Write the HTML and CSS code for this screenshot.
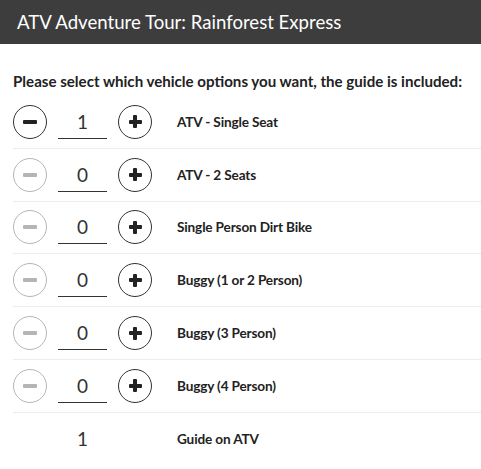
FILE: index.html
```html
<!DOCTYPE html>
<html>
<head>
<meta charset="utf-8">
<link rel="stylesheet" href="styles.css">
</head>
<body>
<header class="topbar"><h1 class="title">ATV Adventure Tour: Rainforest Express</h1></header>
<main class="content">
  <p class="intro">Please select which vehicle options you want, the guide is included:</p>
  <ul class="options">
    <li class="row">
      <button class="btn"><span class="minus"></span></button>
      <span class="qty">1</span>
      <button class="btn"><span class="plus"></span></button>
      <span class="label">ATV - Single Seat</span>
    </li>
    <li class="row">
      <button class="btn off"><span class="minus"></span></button>
      <span class="qty">0</span>
      <button class="btn"><span class="plus"></span></button>
      <span class="label">ATV - 2 Seats</span>
    </li>
    <li class="row">
      <button class="btn off"><span class="minus"></span></button>
      <span class="qty">0</span>
      <button class="btn"><span class="plus"></span></button>
      <span class="label">Single Person Dirt Bike</span>
    </li>
    <li class="row">
      <button class="btn off"><span class="minus"></span></button>
      <span class="qty">0</span>
      <button class="btn"><span class="plus"></span></button>
      <span class="label">Buggy (1 or 2 Person)</span>
    </li>
    <li class="row">
      <button class="btn off"><span class="minus"></span></button>
      <span class="qty">0</span>
      <button class="btn"><span class="plus"></span></button>
      <span class="label">Buggy (3 Person)</span>
    </li>
    <li class="row">
      <button class="btn off"><span class="minus"></span></button>
      <span class="qty">0</span>
      <button class="btn"><span class="plus"></span></button>
      <span class="label">Buggy (4 Person)</span>
    </li>
    <li class="row guide">
      <span class="spacer"></span>
      <span class="qty fixed">1</span>
      <span class="spacer"></span>
      <span class="label">Guide on ATV</span>
    </li>
  </ul>
</main>
</body>
</html>
```

FILE: styles.css
```css
* { box-sizing: border-box; }
html, body { margin: 0; padding: 0; background: #fff; }
body { font-family: "Lato", "Open Sans", sans-serif; color: #222; overflow: hidden; }
.topbar { height: 44px; background: #3d3d3d; display: flex; align-items: center; padding-left: 17px; }
.title { margin: 0; font-size: 18.6px; font-weight: 400; color: #fff; }
.content { padding-left: 13px; }
.intro { margin: 0; padding-top: 27px; height: 52px; font-size: 15.1px; font-weight: 700; color: #222; line-height: 20px; }
.options { list-style: none; margin: 0; padding: 0; }
.row { display: flex; align-items: center; height: 52.8px; border-bottom: 1px solid #ececec; }
.row.guide { border-bottom: none; }
.btn { width: 34px; height: 34px; border-radius: 50%; border: 1px solid #333; background: #fff; padding: 0; display: flex; align-items: center; justify-content: center; flex: none; }
.btn.off { border-color: #b5b5b5; }
.minus { display: block; width: 14px; height: 4px; border-radius: 1px; background: #222; }
.btn.off .minus { background: #b5b5b5; }
.plus { display: block; position: relative; width: 13px; height: 13px; }
.plus::before, .plus::after { content: ""; position: absolute; background: #222; border-radius: 1px; }
.plus::before { left: 0; top: 4.5px; width: 13px; height: 4px; }
.plus::after { left: 4.5px; top: 0; width: 4px; height: 13px; }
.qty { width: 49px; margin: 0 11px; height: 34px; border-bottom: 1px solid #333; text-align: center; font-size: 19px; font-weight: 400; line-height: 34px; color: #333; flex: none; }
.qty.fixed { border-bottom: none; }
.spacer { width: 34px; flex: none; }
.label { margin-left: 25px; font-size: 13.6px; letter-spacing: -0.15px; font-weight: 700; color: #222; }
```
